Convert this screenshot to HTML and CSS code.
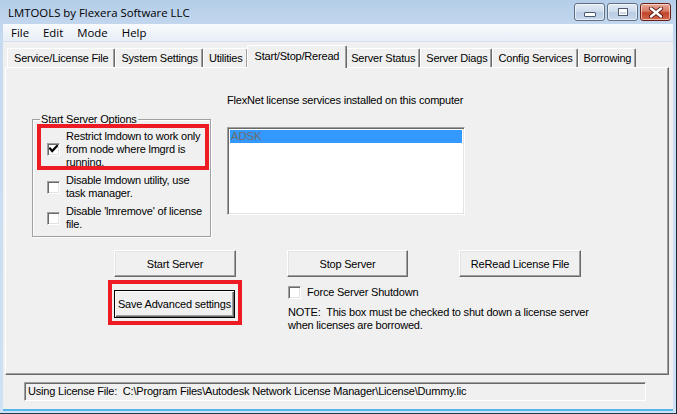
FILE: index.html
```html
<!DOCTYPE html>
<html>
<head>
<meta charset="utf-8">
<title>LMTOOLS</title>
<link rel="stylesheet" href="styles.css">
</head>
<body>
<div class="window">
  <div class="titlebar">
    <span class="title">LMTOOLS by Flexera Software LLC</span>
    <div class="controls">
      <div class="ctl ctl-min"><span class="min-glyph"></span></div>
      <div class="ctl ctl-max"><span class="max-glyph"></span></div>
      <div class="ctl ctl-close">
        <svg width="16" height="11" viewBox="0 0 16 11"><path d="M3 1.5 L13 9.5 M13 1.5 L3 9.5" stroke="#5b1a10" stroke-width="4.2" stroke-linecap="round"/><path d="M3 1.5 L13 9.5 M13 1.5 L3 9.5" stroke="#ffffff" stroke-width="2.4" stroke-linecap="round"/></svg>
      </div>
    </div>
  </div>
  <div class="menubar">
    <span class="menu-item">File</span>
    <span class="menu-item">Edit</span>
    <span class="menu-item">Mode</span>
    <span class="menu-item">Help</span>
  </div>
  <div class="client">
    <div class="tabs">
      <div class="tab tab-first">Service/License File</div>
      <div class="tab">System Settings</div>
      <div class="tab">Utilities</div>
      <div class="tab tab-active">Start/Stop/Reread</div>
      <div class="tab">Server Status</div>
      <div class="tab">Server Diags</div>
      <div class="tab">Config Services</div>
      <div class="tab">Borrowing</div>
    </div>
    <div class="panel">
      <div class="top-row">
        <fieldset class="group">
          <legend class="legend">Start Server Options</legend>
          <div class="option highlight">
            <span class="checkbox"><svg width="9" height="9" viewBox="0 0 9 9"><path d="M1 3.5 L3.2 6 L8 1" fill="none" stroke="#000" stroke-width="2.2" stroke-linecap="square"/></svg></span>
            <span class="opt-text">Restrict lmdown to work only<br>from node where lmgrd is<br>running.</span>
          </div>
          <div class="option">
            <span class="checkbox"></span>
            <span class="opt-text">Disable lmdown utility, use<br>task manager.</span>
          </div>
          <div class="option">
            <span class="checkbox"></span>
            <span class="opt-text">Disable 'lmremove' of license<br>file.</span>
          </div>
        </fieldset>
        <div class="services">
          <div class="services-label">FlexNet license services installed on this computer</div>
          <div class="listbox">
            <div class="list-row selected">ADSK</div>
          </div>
        </div>
      </div>
      <div class="btn-row">
        <div class="button btn-start">Start Server</div>
        <div class="button btn-stop">Stop Server</div>
        <div class="button btn-reread">ReRead License File</div>
      </div>
      <div class="lower-row">
        <div class="button button-default highlight-btn">Save Advanced settings</div>
        <div class="force">
          <div class="force-line">
            <span class="checkbox"></span>
            <span class="force-text">Force Server Shutdown</span>
          </div>
          <div class="note">NOTE:&nbsp; This box must be checked to shut down a license server<br>when licenses are borrowed.</div>
        </div>
      </div>
    </div>
    <div class="statusbar">
      <div class="status-field">Using License File:&nbsp; C:\Program Files\Autodesk Network License Manager\License\Dummy.lic</div>
    </div>
  </div>
</div>
</body>
</html>
```
FILE: styles.css
```css
* { box-sizing: border-box; }

html, body {
  margin: 0;
  padding: 0;
}

body {
  width: 677px;
  height: 414px;
  overflow: hidden;
  font-family: "Liberation Sans", Arial, sans-serif;
  font-size: 11px;
  letter-spacing: -0.2px;
  color: #000;
  background: #ffffff;
}

.window {
  width: 677px;
  height: 414px;
  display: flex;
  flex-direction: column;
  background: linear-gradient(#b9d1ea, #c6daf0 40px, #cfe1f4);
  border-right: 1px solid #1d2733;
  border-bottom: 1px solid #1d3a52;
}

/* ---------- title bar ---------- */
.titlebar {
  height: 24px;
  display: flex;
  align-items: center;
  padding-left: 8px;
  flex: none;
  background: linear-gradient(#b4cde8, #c2d7ee);
}

.title {
  font-family: "Open Sans", "Liberation Sans", sans-serif;
  font-size: 11.4px;
  letter-spacing: 0;
  color: #000;
  flex: 1;
  padding-top: 1px;
}

.controls {
  display: flex;
  align-items: flex-start;
  align-self: flex-start;
  padding-top: 3px;
  padding-right: 5px;
  gap: 2px;
}

.ctl {
  height: 18px;
  border: 1px solid #5f6f85;
  border-radius: 3px;
  display: flex;
  align-items: center;
  justify-content: center;
  box-shadow: inset 0 0 0 1px rgba(255, 255, 255, 0.55);
}

.ctl-min, .ctl-max {
  width: 31px;
  background: linear-gradient(#e2ebf6, #cfdcec 45%, #b9cce3 55%, #c8d9ec);
}

.ctl-close {
  width: 31px;
  border-color: #6b1f14;
  background: linear-gradient(#e9a899, #d77a63 45%, #c1432a 55%, #d3684e);
}

.min-glyph {
  width: 12px;
  height: 5px;
  margin-top: 5px;
  background: #ffffff;
  border: 1px solid #4b5a6e;
  border-radius: 1px;
}

.max-glyph {
  width: 10px;
  height: 8px;
  border: 1px solid #4b5a6e;
  box-shadow: inset 0 0 0 1px #ffffff, inset 0 2px 0 1px #ffffff;
  background: #c9d7e8;
}

/* ---------- menu ---------- */
.menubar {
  height: 18px;
  margin: 0 3px;
  flex: none;
  display: flex;
  align-items: center;
  padding-left: 3px;
  background: linear-gradient(#f8fafd, #e7eef7);
  border-bottom: 1px solid #d7e1ee;
  font-family: "Open Sans", "Liberation Sans", sans-serif;
  font-size: 11.4px;
  letter-spacing: 0;
}

.menu-item {
  padding: 0 7px 0 5px;
}

.menu-item + .menu-item { margin-left: 2px; }

/* ---------- client ---------- */
.client {
  flex: 1;
  margin: 0 3px 2px 3px;
  background: #f0f0f0;
  display: flex;
  flex-direction: column;
  padding: 3px 4px 0 2px;
  border-bottom: 2px solid #55b7e6;
}

.tabs {
  display: flex;
  align-items: flex-end;
  height: 22px;
  padding-left: 2px;
  position: relative;
  z-index: 1;
}

.tab {
  height: 19px;
  padding: 0 4px 0 5px;
  line-height: 18px;
  white-space: nowrap;
  background: #f0f0f0;
  border-top: 1px solid #ffffff;
  border-left: 1px solid #ffffff;
  border-right: 1px solid #696969;
  box-shadow: inset -1px 0 0 #a0a0a0;
  border-radius: 2px 2px 0 0;
}

.tab-first {
  padding: 0 6px 0 6px;
}

.tab-active {
  height: 23px;
  margin: 0 -2px 0 -1px;
  margin-bottom: -1px;
  padding: 0 7px 0 7px;
  line-height: 20px;
  position: relative;
  z-index: 2;
}

.panel {
  height: 308px;
  flex: none;
  border-top: 1px solid #ffffff;
  border-left: 1px solid #ffffff;
  border-right: 1px solid #696969;
  border-bottom: 1px solid #696969;
  box-shadow: inset -1px -1px 0 #a0a0a0;
  display: flex;
  flex-direction: column;
}

.top-row {
  display: flex;
  align-items: flex-start;
}

/* group box */
.group {
  margin: 45px 0 0 26px;
  padding: 0 0 7px 0;
  width: 179px;
  height: 124px;
  border: 1px solid #a0a0a0;
  box-shadow: 1px 1px 0 #ffffff, inset 1px 1px 0 #ffffff;
  min-width: 0;
}

.legend {
  margin-left: 7px;
  padding: 0 1px;
  line-height: 13px;
}

.option {
  display: flex;
  align-items: center;
  margin-left: 14px;
  width: 160px;
  line-height: 13px;
}

.option:first-of-type { margin-top: 4px; }
.option + .option { margin-top: 5px; }

.opt-text {
  white-space: nowrap;
  margin-left: 6px;
}

.checkbox {
  width: 13px;
  height: 13px;
  flex: none;
  background: #ffffff;
  border-top: 1px solid #a0a0a0;
  border-left: 1px solid #a0a0a0;
  border-right: 1px solid #ffffff;
  border-bottom: 1px solid #ffffff;
  box-shadow: inset 1px 1px 0 #696969, inset -1px -1px 0 #e3e3e3;
  display: flex;
  align-items: center;
  justify-content: center;
}

.highlight { position: relative; }

.highlight::after {
  content: "";
  position: absolute;
  top: -6px;
  bottom: -1px;
  left: -10px;
  right: -2px;
  border: 4px solid #ed1c24;
}

/* services list */
.services {
  margin-left: 16px;
  padding-top: 26px;
}

.services-label {
  line-height: 13px;
  white-space: nowrap;
}

.listbox {
  margin-top: 20px;
  width: 238px;
  height: 88px;
  background: #ffffff;
  border-top: 1px solid #a0a0a0;
  border-left: 1px solid #a0a0a0;
  border-right: 1px solid #ffffff;
  border-bottom: 1px solid #ffffff;
  box-shadow: inset 1px 1px 0 #696969, inset -1px -1px 0 #e3e3e3;
  padding: 2px 2px 0 2px;
}

.list-row {
  height: 13px;
  line-height: 13px;
  padding-left: 1px;
  font-size: 11.5px;
}

.list-row.selected {
  background: #3399ff;
  color: #6d6d6d;
}

/* buttons */
.button {
  height: 27px;
  display: flex;
  align-items: center;
  justify-content: center;
  background: #f0f0f0;
  border-top: 1px solid #ffffff;
  border-left: 1px solid #ffffff;
  border-right: 1px solid #696969;
  border-bottom: 1px solid #696969;
  box-shadow: inset -1px -1px 0 #a0a0a0, inset 1px 1px 0 #e3e3e3;
  white-space: nowrap;
}

.btn-row {
  display: flex;
  margin-top: 13px;
  padding-left: 108px;
}

.btn-start { width: 122px; }
.btn-stop { width: 121px; margin-left: 51px; }
.btn-reread { width: 122px; margin-left: 51px; }

.lower-row {
  display: flex;
  align-items: flex-start;
  margin-top: 9px;
  padding-left: 108px;
}

.button-default {
  width: 121px;
  height: 28px;
  margin-top: 4px;
  border: 1px solid #000000;
  box-shadow: inset 1px 1px 0 #ffffff, inset -1px -1px 0 #696969, inset -2px -2px 0 #a0a0a0;
}

.highlight-btn { position: relative; }

.highlight-btn::after {
  content: "";
  position: absolute;
  top: -11px;
  bottom: -8px;
  left: -7px;
  right: -8px;
  border: 4px solid #ed1c24;
}

.force {
  margin-left: 53px;
}

.force-line {
  display: flex;
  align-items: center;
  height: 13px;
  line-height: 13px;
}

.force-text { margin-left: 6px; }

.note {
  margin-top: 7px;
  line-height: 13px;
  white-space: nowrap;
}

/* status bar */
.statusbar {
  flex: 1;
  padding: 7px 0 0 19px;
}

.status-field {
  width: 622px;
  height: 19px;
  line-height: 17px;
  padding-left: 3px;
  white-space: nowrap;
  border-top: 1px solid #a0a0a0;
  border-left: 1px solid #a0a0a0;
  border-right: 1px solid #ffffff;
  border-bottom: 1px solid #ffffff;
  box-shadow: inset 1px 1px 0 #696969;
}
```
